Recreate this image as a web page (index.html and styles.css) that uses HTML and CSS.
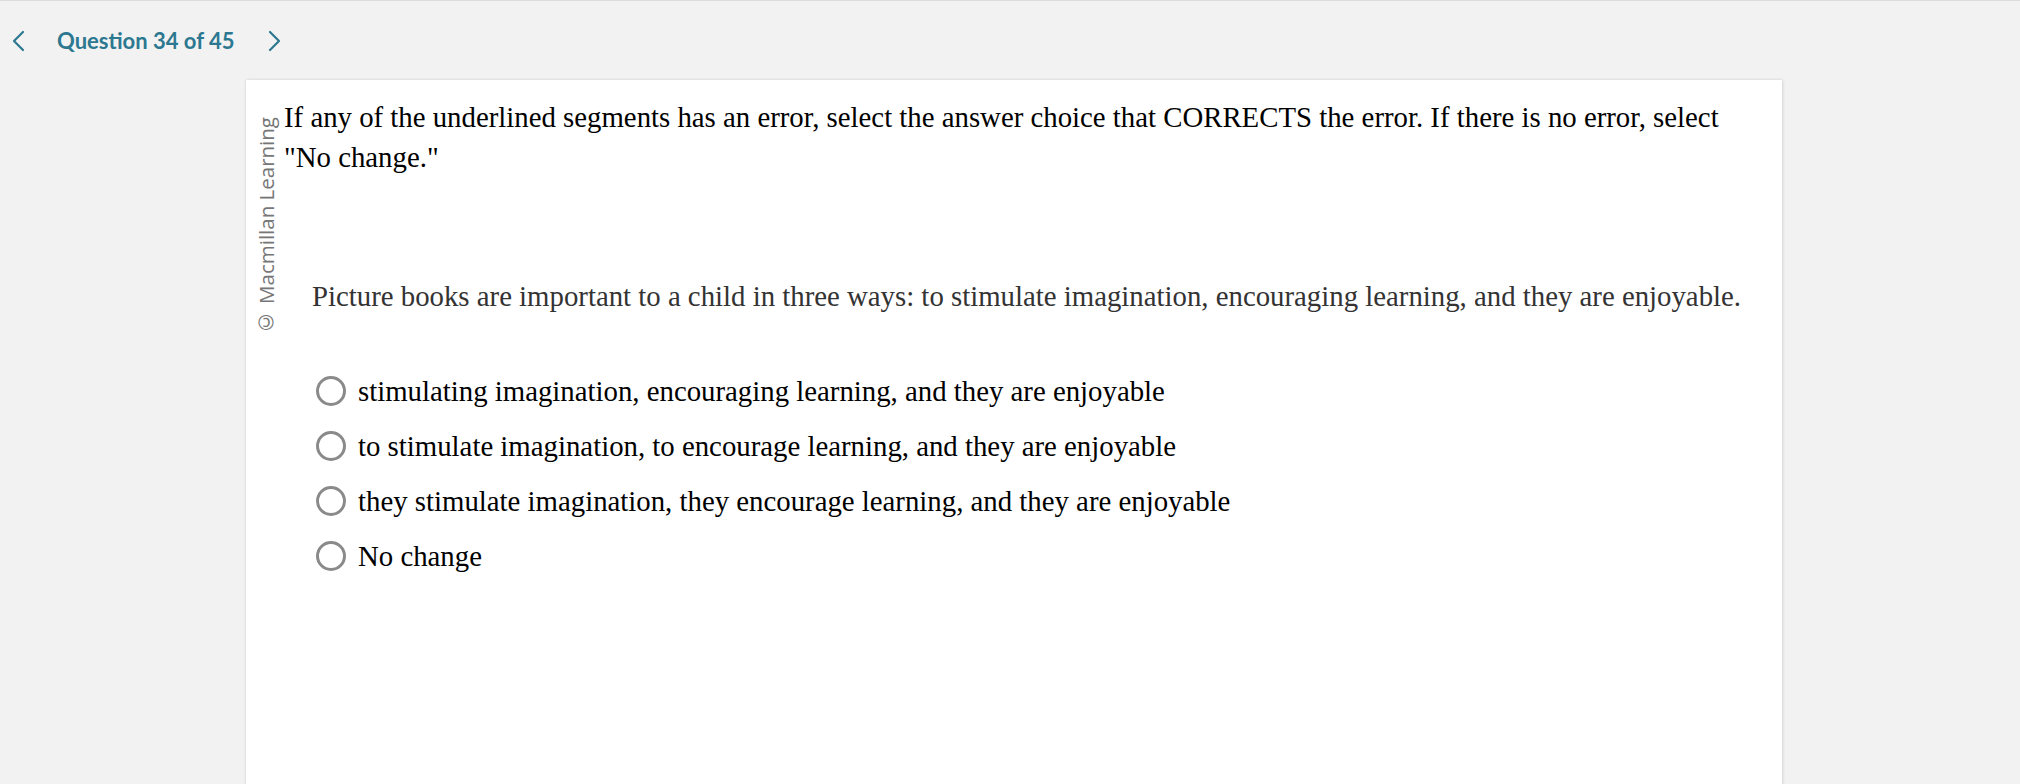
FILE: index.html
```html
<!DOCTYPE html>
<html lang="en">
<head>
<meta charset="utf-8">
<title>Question 34 of 45</title>
<link rel="stylesheet" href="styles.css">
</head>
<body>
<div class="page">
  <header class="topbar">
    <button class="nav-btn prev" aria-label="Previous question">
      <svg width="14" height="22" viewBox="0 0 14 22"><path d="M12 2 L3 11 L12 20" fill="none" stroke="#2d7891" stroke-width="2.2" stroke-linecap="round" stroke-linejoin="round"/></svg>
    </button>
    <span class="q-title">Question 34 of 45</span>
    <button class="nav-btn next" aria-label="Next question">
      <svg width="14" height="22" viewBox="0 0 14 22"><path d="M2 2 L11 11 L2 20" fill="none" stroke="#2d7891" stroke-width="2.2" stroke-linecap="round" stroke-linejoin="round"/></svg>
    </button>
  </header>
  <main class="card">
    <div class="side"><span class="copyright">© Macmillan Learning</span></div>
    <div class="content">
      <p class="prompt">If any of the underlined segments has an error, select the answer choice that CORRECTS the error. If there is no error, select "No change."</p>
      <p class="sentence">Picture books are important to a child in three ways: to stimulate imagination, encouraging learning, and they are enjoyable.</p>
      <ul class="options">
        <li class="option"><span class="radio"></span><span>stimulating imagination, encouraging learning, and they are enjoyable</span></li>
        <li class="option"><span class="radio"></span><span>to stimulate imagination, to encourage learning, and they are enjoyable</span></li>
        <li class="option"><span class="radio"></span><span>they stimulate imagination, they encourage learning, and they are enjoyable</span></li>
        <li class="option"><span class="radio"></span><span>No change</span></li>
      </ul>
    </div>
  </main>
</div>
</body>
</html>
```

FILE: styles.css
```css
html, body {
  margin: 0;
  padding: 0;
  height: 100%;
  overflow: hidden;
}
body {
  background: #f2f2f2;
  border-top: 1px solid #dcdcdc;
}
.page {
  display: flex;
  flex-direction: column;
  height: 100%;
}
.topbar {
  display: flex;
  align-items: center;
  height: 79px;
  padding-left: 11px;
  box-sizing: border-box;
}
.nav-btn {
  background: none;
  border: 0;
  padding: 0;
  margin: 0;
  width: 14px;
  height: 22px;
  display: flex;
  align-items: center;
  justify-content: center;
}
.nav-btn svg { display: block; }
.q-title {
  font-family: Lato, "Open Sans", sans-serif;
  font-weight: 700;
  font-size: 22px;
  color: #2d7891;
  margin-left: 32px;
  margin-right: 33px;
}
.card {
  margin-left: 246px;
  width: 1536px;
  flex: 1;
  background: #fff;
  box-shadow: 1px 0 3px rgba(0,0,0,0.12), -1px 0 2px rgba(0,0,0,0.06);
  display: flex;
  align-items: flex-start;
}
.side {
  width: 38px;
  padding-top: 37px;
  display: flex;
  justify-content: center;
  padding-left: 1px;
  box-sizing: border-box;
}
.copyright {
  writing-mode: vertical-rl;
  transform: rotate(180deg);
  font-family: "Open Sans", sans-serif;
  font-size: 20.5px;
  line-height: 22px;
  color: #767676;
  white-space: nowrap;
}
.content {
  flex: 1;
  padding-top: 17px;
  font-family: "Liberation Serif", "Times New Roman", serif;
  font-size: 28.8px;
}
.prompt {
  margin: 0;
  width: 1450px;
  line-height: 40px;
  color: #000;
}
.sentence {
  margin: 99px 0 0 28px;
  line-height: 40px;
  color: #333;
}
.options {
  list-style: none;
  margin: 55px 0 0 32px;
  padding: 0;
  display: flex;
  flex-direction: column;
  gap: 15px;
}
.option {
  display: flex;
  align-items: center;
  gap: 12px;
  line-height: 40px;
  color: #000;
}
.radio {
  width: 24px;
  height: 24px;
  border: 3px solid #8a8a8a;
  border-radius: 50%;
  flex: none;
  margin-top: -1px;
}
```
